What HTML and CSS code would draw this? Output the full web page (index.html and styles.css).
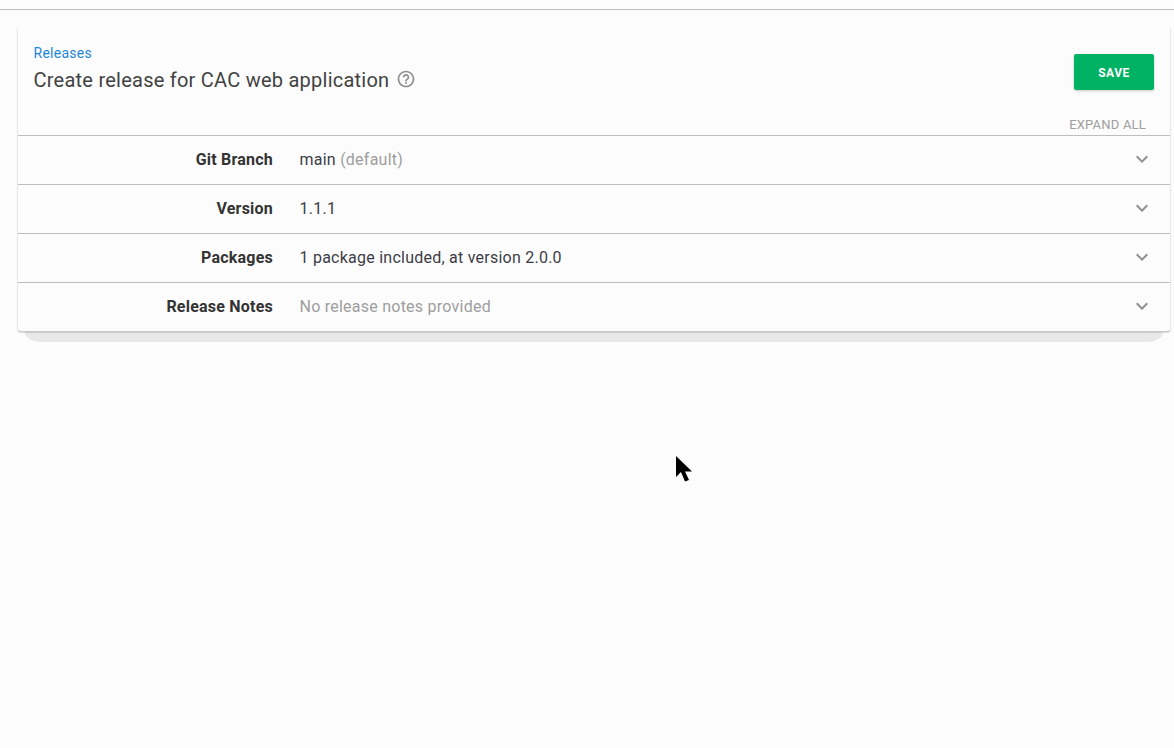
FILE: index.html
```html
<!DOCTYPE html>
<html lang="en">
<head>
<meta charset="utf-8">
<title>Create release</title>
<link rel="stylesheet" href="styles.css">
</head>
<body>
<div class="topbar"></div>
<main class="content">
  <section class="card">
    <header class="card-head">
      <div class="head-main">
        <div class="titles">
          <a class="crumb">Releases</a>
          <h1 class="title">Create release for CAC web application
            <svg class="help" viewBox="0 0 24 24" width="20" height="20"><path fill="#8f8f8f" d="M11 18h2v-2h-2v2zm1-16C6.480 2 2 6.480 2 12s4.480 10 10 10 10-4.480 10-10S17.520 2 12 2zm0 18c-4.410 0-8-3.590-8-8s3.590-8 8-8 8 3.590 8 8-3.590 8-8 8zm0-14c-2.210 0-4 1.790-4 4h2c0-1.100.9-2 2-2s2 .9 2 2c0 2-3 1.750-3 5h2c0-2.250 3-2.500 3-5 0-2.210-1.790-4-4-4z"/></svg>
          </h1>
        </div>
        <button class="save">SAVE</button>
      </div>
      <div class="expand-row"><span class="expand">EXPAND ALL</span></div>
    </header>
    <div class="row">
      <div class="label">Git Branch</div>
      <div class="value">main <span class="muted">(default)</span></div>
      <svg class="chev" viewBox="0 0 24 24" width="24" height="24"><path fill="#8f8f8f" d="M16.590 8.590 12 13.170 7.410 8.590 6 10l6 6 6-6z"/></svg>
    </div>
    <div class="row">
      <div class="label">Version</div>
      <div class="value">1.1.1</div>
      <svg class="chev" viewBox="0 0 24 24" width="24" height="24"><path fill="#8f8f8f" d="M16.590 8.590 12 13.170 7.410 8.590 6 10l6 6 6-6z"/></svg>
    </div>
    <div class="row">
      <div class="label">Packages</div>
      <div class="value">1 package included, at version 2.0.0</div>
      <svg class="chev" viewBox="0 0 24 24" width="24" height="24"><path fill="#8f8f8f" d="M16.590 8.590 12 13.170 7.410 8.590 6 10l6 6 6-6z"/></svg>
    </div>
    <div class="row">
      <div class="label">Release Notes</div>
      <div class="value muted">No release notes provided</div>
      <svg class="chev" viewBox="0 0 24 24" width="24" height="24"><path fill="#8f8f8f" d="M16.590 8.590 12 13.170 7.410 8.590 6 10l6 6 6-6z"/></svg>
    </div>
  </section>
  <div class="under"></div>
</main>
<svg class="cursor" viewBox="0 0 18 32" width="18" height="32"><path fill="#000" d="M1 1v21l5-5 4 9.500 4-1.500-4-8.500h7z"/></svg>
</body>
</html>
```
FILE: styles.css
```css
* { box-sizing: border-box; }
html, body { margin: 0; height: 100%; }
body {
  background: #fcfcfc;
  font-family: Roboto, "Liberation Sans", sans-serif;
  color: #333;
  overflow: hidden;
  position: relative;
}
.topbar { height: 10px; border-bottom: 1px solid #bdbdbd; }
.content { padding: 18px 3px 0 18px; }
.card {
  background: #fcfcfc;
  border-left: 1px solid #e8e8e8;
  border-right: 1px solid #e8e8e8;
  border-bottom: 1px solid #c8c8c8;
  border-radius: 0 0 4px 4px;
  margin-left: -1px;
  box-shadow: 0 1px 1px rgba(0,0,0,.12);
  position: relative;
  z-index: 1;
}
.card-head { height: 107px; padding: 0 16px 0 15.500px; display: flex; flex-direction: column; }
.head-main { display: flex; justify-content: space-between; align-items: flex-start; height: 86px; }
.titles { padding-top: 16px; }
.crumb { display: block; font-size: 14px; line-height: 18px; color: #1e88d8; letter-spacing: .25px; }
.title {
  margin: 6px 0 0;
  font-size: 20px;
  line-height: 24px;
  font-weight: 400;
  color: #424242;
  letter-spacing: .24px;
  display: flex;
  align-items: center;
  gap: 7px;
}
.help { margin-top: -3px; }
.save {
  margin-top: 26px;
  width: 80px;
  height: 36px;
  border: 0;
  border-radius: 2px;
  background: #00b264;
  color: #fff;
  font: 700 12px/38px Roboto, sans-serif;
  letter-spacing: .5px;
  padding: 0;
  box-shadow: 0 1px 3px rgba(0,0,0,.2);
}
.expand-row { display: flex; justify-content: flex-end; }
.expand { font-size: 13px; line-height: 18px; color: #9e9e9e; padding-right: 8px; margin-top: 2px; letter-spacing: .2px; }
.row {
  height: 49px;
  border-top: 1px solid #bdbdbd;
  display: flex;
  align-items: center;
  font-size: 16px;
  padding-bottom: 2px;
}
.label { width: 255px; text-align: right; font-weight: 700; color: #333; flex: none; letter-spacing: .22px; }
.value { margin-left: 26.500px; flex: 1; color: #3c3c46; letter-spacing: .24px; }
.muted { color: #9e9e9e; }
.chev { margin-right: 16px; flex: none; }
.under {
  height: 10px;
  margin: 0 8px 0 7px;
  background: #e8e8e8;
  border-radius: 0 0 16px 16px / 0 0 10px 10px;
}
.cursor { position: absolute; left: 675px; top: 455px; }
```
